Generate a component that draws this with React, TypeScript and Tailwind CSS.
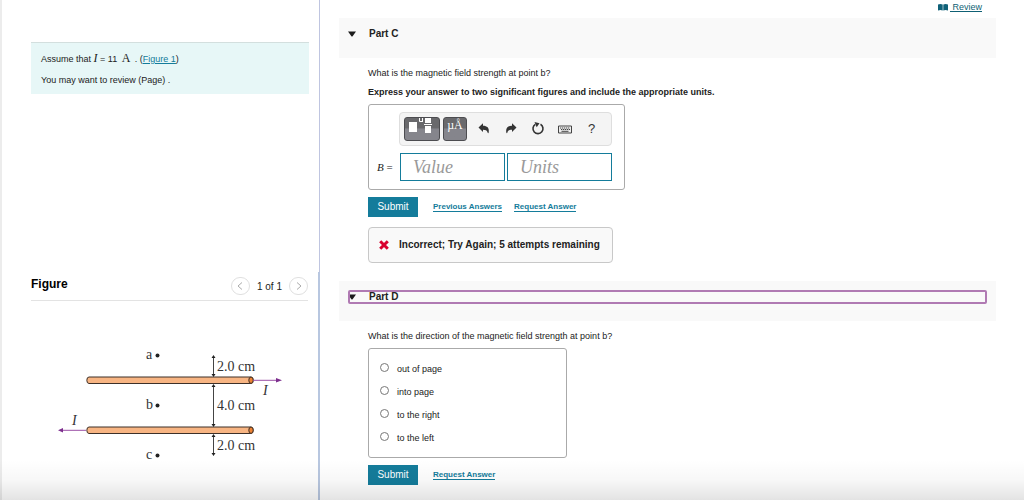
import { useState } from "react";
import type { ReactNode } from "react";

const directions = ["out of page", "into page", "to the right", "to the left"];

const Caret = () => (
  <svg viewBox="0 0 8 6" className="h-[6px] w-2 shrink-0 fill-[#1c1c1c]" aria-hidden="true">
    <path d="M0 0.5h8L4.6 5.2a.8.8 0 0 1-1.2 0z" />
  </svg>
);

const PartHeader = ({ title, focused = false }: { title: string; focused?: boolean }) => (
  <h2 className="flex h-10 bg-[#f9f9f9] px-[9px] pt-[9px]">
    <button
      className={
        focused
          ? "flex h-[14px] w-full items-center gap-3 rounded-xs text-left text-[10px] leading-[14px] font-bold outline-2 -outline-offset-2 outline-[#b07ab3]"
          : "flex h-[14px] w-full items-center gap-3 text-left text-[10px] leading-[14px] font-bold"
      }
    >
      <Caret />
      <span className="pl-px">{title}</span>
    </button>
  </h2>
);

const SubmitButton = () => (
  <button className="h-5 w-[50px] bg-[#147c9b] text-[10px] leading-5 text-white">Submit</button>
);

const ActionLink = ({ children }: { children: ReactNode }) => (
  <a href="#" className="border-b border-[#147c9b] text-[8px] leading-[9px] font-bold text-[#147c9b]">
    {children}
  </a>
);

const Toolbar = () => (
  <div className="flex h-[34px] items-center rounded-sm border border-[#dedede] bg-[#f4f4f4] px-1">
    <button
      aria-label="Templates"
      className="h-6 w-9 rounded-[3px] border border-[#4c4c50] bg-linear-to-b from-[#69696c] from-45% to-[#85858c] to-50%"
    >
      <svg viewBox="0 0 34 22" className="h-[22px] w-[34px]" fill="#fff">
        <path d="M4 4h8v10H4zM20 0h6v5h-6zM19 6h8v1h-8zM20 8h6v7h-6z" />
        <path d="M14.500 0v3.500h3M17.500 0v4" fill="none" stroke="#fff" />
      </svg>
    </button>
    <button
      aria-label="Symbols"
      className="ml-[3px] flex h-6 w-6 justify-center rounded-[3px] border border-[#4c4c50] bg-linear-to-b from-[#69696c] from-45% to-[#85858c] to-50% font-['Liberation_Serif',serif] text-[12px] leading-[14px] text-white"
    >
      µÅ
    </button>
    <button aria-label="Undo" className="ml-[11px]">
      <svg viewBox="0 0 12 12" className="h-3 w-3" fill="#333">
        <path d="M5 .3v2.500c4 0 6.500 2 5.700 6.800-.2.700-.9.700-1.100 0C9.200 7.500 7.500 6.800 5 6.800V9L.5 4.600z" />
      </svg>
    </button>
    <button aria-label="Redo" className="ml-[15px]">
      <svg viewBox="0 0 12 12" className="h-3 w-3" fill="#333">
        <path d="M7 .3v2.500c-4 0-6.500 2-5.700 6.800.2.700.9.700 1.100 0C2.800 7.500 4.500 6.800 7 6.800V9l4.500-4.400z" />
      </svg>
    </button>
    <button aria-label="Reset" className="ml-[14px]">
      <svg viewBox="0 0 14 14" className="h-[14px] w-[14px]">
        <path d="M9.500 2.300A5 5 0 1 1 4.300 2.400" fill="none" stroke="#333" strokeWidth="1.600" />
        <path d="M3.500 0 8.500 1.200 5.700 5.200z" fill="#333" />
      </svg>
    </button>
    <button aria-label="Keyboard shortcuts" className="ml-[13px]">
      <svg viewBox="0 0 14 9" className="h-[9px] w-[14px]">
        <path d="M.5 1h13v7H.5z" fill="#eee" stroke="#444" />
        <path d="M2 3h10M3 4.500h9" fill="none" stroke="#444" strokeDasharray="1.300 .7" />
        <path d="M3.500 6.300h7" stroke="#444" />
      </svg>
    </button>
    <button aria-label="Help" className="ml-4 text-[13px] leading-4 text-[#333]">
      ?
    </button>
  </div>
);

const WiresFigure = () => (
  <svg
    viewBox="0 0 240 120"
    className="ml-[25px] h-[120px] w-[240px] font-['Liberation_Serif',serif]"
    role="img"
    aria-label="Two parallel wires carrying current in opposite directions"
  >
    {/* wires */}
    <g stroke="#3d3028" strokeWidth="1">
      <path d="M33 32h162a2 3 0 0 1 0 6.500H33a2 3 0 0 1 0-6.500z" fill="#f8b583" />
      <ellipse cx="195" cy="35.200" rx="2.200" ry="3.200" fill="#ee8232" />
      <path d="M33 82h162a2 3 0 0 1 0 6.500H33a2 3 0 0 1 0-6.500z" fill="#f8b583" />
      <ellipse cx="195" cy="85.200" rx="2.200" ry="3.200" fill="#ee8232" />
    </g>

    {/* current arrows */}
    <path d="M197 35.300h24M30 85.300H6" stroke="#9a4fa5" strokeWidth="1" />
    <path d="M226 35.300l-6-2.200v4.400zM2 85.300l5-2.200v4.400z" fill="#7d2f8e" />

    {/* distances */}
    <path d="M157.500 12v18M157.500 41v39M157.500 91v18" stroke="#444" strokeWidth="1" />
    <path
      d="M157.500 10l-2 3h4zM157.500 32l-2-3h4zM157.500 39l-2 3h4zM157.500 82l-2-3h4zM157.500 89l-2 3h4zM157.500 111l-2-3h4z"
      fill="#222"
    />

    <g fill="#222">
      <circle cx="101.500" cy="10.500" r="2" />
      <circle cx="101.500" cy="60.500" r="2" />
      <circle cx="101.500" cy="110.500" r="2" />
    </g>
    <g fill="#333" fontSize="14">
      <text x="90" y="14">a</text>
      <text x="90" y="64">b</text>
      <text x="90" y="114">c</text>
      <text x="161" y="26">2.0 cm</text>
      <text x="161" y="65">4.0 cm</text>
      <text x="161" y="105">2.0 cm</text>
      <text x="207" y="50" fontStyle="italic">I</text>
      <text x="16" y="80" fontStyle="italic">I</text>
    </g>
  </svg>
);

export default function App() {
  const [value, setValue] = useState("");
  const [units, setUnits] = useState("");
  const [direction, setDirection] = useState("");

  return (
    <div className="relative flex min-h-screen bg-white font-['Liberation_Sans',Arial,sans-serif] text-[9px] leading-3 text-[#222]">
      <aside className="flex w-80 shrink-0 flex-col border-l-2 border-[#ececec]">
        <div className="h-[272px] border-r border-[#bfc5e0] pt-[42px] pr-[10px] pl-[29px]">
          <div className="flex h-[52px] flex-col gap-[7px] border-t border-[#d3dfde] bg-[#e7f7f7] px-[10px] pt-2">
            <p className="leading-[14px]">
              Assume that <i className="font-['Liberation_Serif',serif] text-[12px]">I</i> = 11{" "}
              <span className="px-[2px] font-['Liberation_Serif',serif] text-[12px]">A</span> . (
              <a href="#figure" className="text-[#147c9b] underline">Figure 1</a>)
            </p>
            <p className="leading-[14px]">You may want to review (Page) .</p>
          </div>
        </div>

        <div id="figure" className="grow border-r-2 border-[#b8c7e0] pr-[10px] pl-[29px]">
          <div className="flex h-[29px] items-center border-b border-[#e3e3e3]">
            <h2 className="grow pb-1 text-[12px] font-bold text-black">Figure</h2>
            <button aria-label="Previous figure" className="flex h-[18px] w-[19px] items-center justify-center rounded-full border border-[#e0e0e0]">
              <svg viewBox="0 0 6 8" className="h-2 w-[6px]" fill="none" stroke="#aaa">
                <path d="M5 .5 1 4l4 3.500" />
              </svg>
            </button>
            <span className="px-[7px] pt-[2px] text-[10px]">1 of 1</span>
            <button aria-label="Next figure" className="flex h-[18px] w-[19px] items-center justify-center rounded-full border border-[#e0e0e0]">
              <svg viewBox="0 0 6 8" className="h-2 w-[6px]" fill="none" stroke="#aaa">
                <path d="M1 .5 5 4 1 7.500" />
              </svg>
            </button>
          </div>
          <div className="pt-11">
            <WiresFigure />
          </div>
        </div>
      </aside>

      <main className="min-w-0 grow pr-7 pl-[19px]">
        <div className="flex h-[18px] items-start justify-end pt-px pr-[14px]">
          <a href="#" className="flex items-center text-[#0f5f74]">
            <svg viewBox="0 0 10 7" className="h-[7px] w-[10px]" fill="#0f6178" aria-hidden="true">
              <path d="M0 .5Q2.500-.3 4.700.5v6Q2.500 5.700 0 6.500zM5.300.5Q7.500-.3 10 .5v6Q7.500 5.700 5.300 6.500z" />
            </svg>
            <span className="ml-[2px] whitespace-pre underline">{" Review"}</span>
          </a>
        </div>

        <section>
          <PartHeader title="Part C" />
          <div className="pt-[9px] pl-[29px]">
            <p>What is the magnetic field strength at point b?</p>
            <p className="mt-[7px] font-bold">
              Express your answer to two significant figures and include the appropriate units.
            </p>

            <div className="mt-[6px] w-[257px] rounded-[3px] border border-[#aaa] pt-[7px] pr-3 pb-2 pl-2">
              <div className="pl-[22px]">
                <Toolbar />
              </div>
              <div className="mt-[7px] flex h-7 items-center">
                <span className="w-[23px] shrink-0 font-['Liberation_Serif',serif] text-[11px] whitespace-nowrap">
                  <i>B</i> =
                </span>
                <input
                  aria-label="Value"
                  placeholder="Value"
                  value={value}
                  onChange={(e) => setValue(e.target.value)}
                  className="h-7 w-0 grow border border-[#147c9b] px-3 font-['Liberation_Serif',serif] text-[18px] italic placeholder:text-[#999]"
                />
                <input
                  aria-label="Units"
                  placeholder="Units"
                  value={units}
                  onChange={(e) => setUnits(e.target.value)}
                  className="ml-[2px] h-7 w-0 grow border border-[#147c9b] px-3 font-['Liberation_Serif',serif] text-[18px] italic placeholder:text-[#999]"
                />
              </div>
            </div>

            <div className="mt-[7px] flex items-center">
              <SubmitButton />
              <div className="ml-[15px] flex gap-3">
                <ActionLink>Previous Answers</ActionLink>
                <ActionLink>Request Answer</ActionLink>
              </div>
            </div>

            <div className="mt-[10px] flex h-9 w-[245px] items-center rounded-sm border border-[#c8c8c8] bg-[#f9f9f9] pl-[10px] text-[10px] font-bold">
              <svg viewBox="0 0 10 10" className="h-[10px] w-[10px]" aria-hidden="true">
                <path d="M1.200 1.200l7.600 7.600M8.800 1.200l-7.600 7.600" stroke="#d8002e" strokeWidth="3" />
              </svg>
              <span className="ml-[10px] whitespace-nowrap">Incorrect; Try Again; 5 attempts remaining</span>
            </div>
          </div>
        </section>

        <section className="mt-[18px]">
          <PartHeader title="Part D" focused />
          <div className="pt-[9px] pl-[29px]">
            <p id="direction-question">What is the direction of the magnetic field strength at point b?</p>
            <div
              role="radiogroup"
              aria-labelledby="direction-question"
              className="mt-[6px] flex h-[110px] w-[199px] flex-col gap-[11px] rounded-[3px] border border-[#aaa] pt-[14px] pl-[11px]"
            >
              {directions.map((d) => (
                <label key={d} className="flex items-start">
                  <input
                    type="radio"
                    name="direction"
                    checked={direction === d}
                    onChange={() => setDirection(d)}
                    className="h-[9px] w-[9px] appearance-none rounded-full border border-[#777] bg-white checked:bg-[#147c9b]"
                  />
                  <span className="ml-2">{d}</span>
                </label>
              ))}
            </div>
            <div className="mt-[7px] flex items-center">
              <SubmitButton />
              <div className="ml-[15px] flex">
                <ActionLink>Request Answer</ActionLink>
              </div>
            </div>
          </div>
        </section>
      </main>

      {/* page fades out at the bottom edge */}
      <div className="pointer-events-none absolute inset-x-0 bottom-0 h-10 bg-linear-to-b from-transparent via-black/3 to-black/11" />
    </div>
  );
}
